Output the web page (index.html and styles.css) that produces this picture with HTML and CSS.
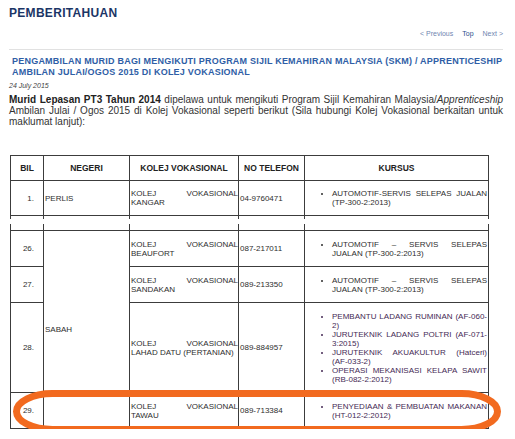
FILE: index.html
```html
<!DOCTYPE html>
<html lang="ms">
<head>
<meta charset="utf-8">
<title>Pemberitahuan</title>
<link rel="stylesheet" href="styles.css">
</head>
<body>
<div class="page">
  <h1 class="page-title">PEMBERITAHUAN</h1>
  <nav class="pager">
    <a href="#" class="pager-link">&lt; Previous</a>
    <a href="#" class="pager-link pager-top">Top</a>
    <a href="#" class="pager-link">Next &gt;</a>
  </nav>
  <h2 class="headline">PENGAMBILAN MURID BAGI MENGIKUTI PROGRAM SIJIL KEMAHIRAN MALAYSIA (SKM) / APPRENTICESHIP<br>AMBILAN JULAI/OGOS 2015 DI KOLEJ VOKASIONAL</h2>
  <p class="date">24 July 2015</p>
  <p class="intro"><b>Murid Lepasan PT3 Tahun 2014</b> dipelawa untuk mengikuti Program Sijil Kemahiran Malaysia/<i>Apprenticeship</i> Ambilan Julai / Ogos 2015 di Kolej Vokasional seperti berikut (Sila hubungi Kolej Vokasional berkaitan untuk maklumat lanjut):</p>

  <div class="table-wrap">
    <table class="kv-table">
      <colgroup><col class="c-bil"><col class="c-neg"><col class="c-kv"><col class="c-tel"><col class="c-kur"></colgroup>
      <thead>
        <tr class="head-row">
          <th>BIL</th><th>NEGERI</th><th>KOLEJ VOKASIONAL</th><th>NO TELEFON</th><th>KURSUS</th>
        </tr>
      </thead>
      <tbody>
        <tr class="row-first">
          <td class="bil">1.</td>
          <td class="neg">PERLIS</td>
          <td class="kv">KOLEJ VOKASIONAL KANGAR</td>
          <td class="tel">04-9760471</td>
          <td class="kur"><ul><li>AUTOMOTIF-SERVIS SELEPAS JUALAN (TP-300-2:2013)</li></ul></td>
        </tr>
        <tr class="cut cut-bottom"><td></td><td></td><td></td><td></td><td></td></tr>
      </tbody>
    </table>

    <table class="kv-table second">
      <colgroup><col class="c-bil"><col class="c-neg"><col class="c-kv"><col class="c-tel"><col class="c-kur"></colgroup>
      <tbody>
        <tr class="cut cut-top"><td></td><td></td><td></td><td></td><td></td></tr>
        <tr class="row-std">
          <td class="bil">26.</td>
          <td class="neg" rowspan="4">SABAH</td>
          <td class="kv">KOLEJ VOKASIONAL BEAUFORT</td>
          <td class="tel">087-217011</td>
          <td class="kur"><ul><li>AUTOMOTIF – SERVIS SELEPAS JUALAN (TP-300-2:2013)</li></ul></td>
        </tr>
        <tr class="row-std">
          <td class="bil">27.</td>
          <td class="kv">KOLEJ VOKASIONAL SANDAKAN</td>
          <td class="tel">089-213350</td>
          <td class="kur"><ul><li>AUTOMOTIF – SERVIS SELEPAS JUALAN (TP-300-2:2013)</li></ul></td>
        </tr>
        <tr class="row-tall">
          <td class="bil">28.</td>
          <td class="kv">KOLEJ VOKASIONAL <span class="nw">LAHAD DATU (PERTANIAN)</span></td>
          <td class="tel">089-884957</td>
          <td class="kur tint"><ul>
            <li>PEMBANTU LADANG RUMINAN (AF-060-<wbr>2)</li>
            <li>JURUTEKNIK LADANG POLTRI (AF-071-<wbr>3:2015)</li>
            <li>JURUTEKNIK AKUAKULTUR (Hatceri) (AF-033-2)</li>
            <li>OPERASI MEKANISASI KELAPA SAWIT (RB-082-2:2012)</li>
          </ul></td>
        </tr>
        <tr class="row-std">
          <td class="bil">29.</td>
          <td class="kv">KOLEJ VOKASIONAL TAWAU</td>
          <td class="tel">089-713384</td>
          <td class="kur tint"><ul><li><span class="nw">PENYEDIAAN &amp; PEMBUATAN MAKANAN</span> (HT-012-2:2012)</li></ul></td>
        </tr>
      </tbody>
    </table>

    <svg class="highlight" width="500" height="46" viewBox="0 0 500 46" aria-hidden="true">
      <rect x="10.5" y="3.5" width="481" height="36" rx="36" ry="18" fill="none" stroke="#f26a1f" stroke-width="7"/>
    </svg>
  </div>
</div>
</body>
</html>
```

FILE: styles.css
```css
html, body {
  margin: 0;
  padding: 0;
  background: #ffffff;
}

.page {
  position: relative;
  padding: 5px 12px 0 9px;
  font-family: "Liberation Sans", Arial, sans-serif;
  color: #333333;
}

.page-title {
  margin: 0;
  font-size: 12px;
  line-height: 16px;
  font-weight: bold;
  letter-spacing: 0.3px;
  color: #1b3566;
}

.pager {
  margin-top: 8px;
  padding-bottom: 10px;
  border-bottom: 1px solid #e1e1e1;
  display: flex;
  justify-content: flex-end;
  gap: 9px;
  font-size: 7px;
  line-height: 10px;
}

.pager-link {
  color: #6f86b0;
  text-decoration: none;
}

.pager-top {
  color: #2c4f8c;
}

.headline {
  margin: 6px 0 0 3px;
  font-size: 9px;
  line-height: 11px;
  font-weight: bold;
  letter-spacing: 0.22px;
  color: #2f5ea6;
  white-space: nowrap;
}

.date {
  margin: 3px 0 0 0;
  font-size: 7px;
  line-height: 10px;
  font-style: italic;
  color: #444444;
}

.intro {
  margin: 3px 0 0 0;
  font-size: 10px;
  line-height: 11px;
  text-align: justify;
  color: #333333;
}

.intro b {
  color: #222222;
}

.table-wrap {
  position: relative;
  margin-top: 28px;
  padding-left: 1px;
}

.kv-table {
  border-collapse: collapse;
  table-layout: fixed;
  width: 478px;
  font-size: 8px;
  line-height: 9px;
  color: #2e2e2e;
}

.kv-table.second {
  margin-top: 5px;
}

.c-bil { width: 33px; }
.c-neg { width: 86px; }
.c-kv { width: 109px; }
.c-tel { width: 66px; }
.c-kur { width: 184px; }

.kv-table th,
.kv-table td {
  border: 1px solid #3c3c3c;
  padding: 0;
  vertical-align: middle;
}

.head-row {
  height: 25px;
}

.head-row th {
  font-size: 8.5px;
  font-weight: bold;
  text-align: center;
  color: #222222;
}

.row-first {
  height: 35px;
}

.row-std {
  height: 36px;
}

.row-tall {
  height: 90px;
}

.bil {
  text-align: right;
  padding-right: 9px !important;
}

.neg {
  padding-left: 1px !important;
}

.kv {
  text-align: justify;
  padding-left: 1px !important;
}

.tel {
  padding-left: 1px !important;
}

.nw {
  white-space: nowrap;
}

.kur ul {
  margin: 0;
  padding: 0 1px 0 27px;
  text-align: justify;
}

.kur li {
  margin: 0;
}

.tint {
  color: #452a55;
}

.cut td {
  border-top: none;
  border-bottom: none;
}

.cut-bottom td {
  height: 3px;
}

.cut-top td {
  height: 6px;
}

.highlight {
  position: absolute;
  left: -3px;
  top: 235px;
  pointer-events: none;
}
```
